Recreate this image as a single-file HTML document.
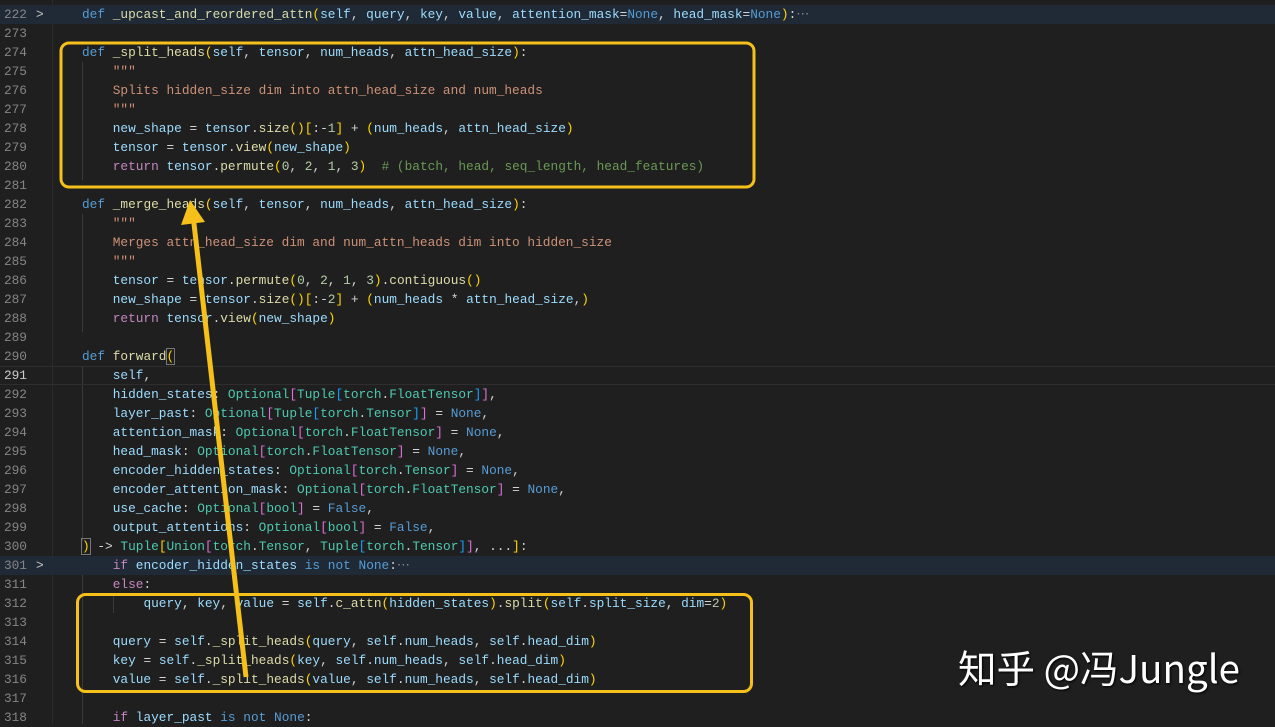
<!DOCTYPE html>
<html><head><meta charset="utf-8"><style>
body{margin:0;width:1275px;height:724px;overflow:hidden;background:#1f1f1f;font-family:"Liberation Mono",monospace;font-size:12.8px;position:relative}
.l{position:absolute;left:0;width:1275px;height:19px;line-height:19px;white-space:pre;color:#d4d4d4}
.n{position:absolute;left:0;width:27px;text-align:right;color:#858585}
.c{position:absolute;left:82px}
.hl{background:#1f2a36}
.cur{border-top:1px solid #2e2e2e;border-bottom:1px solid #2e2e2e;box-sizing:border-box;line-height:17px}
.k{color:#569cd6}.f{color:#dcdcaa}.p{color:#9cdcfe}.s{color:#ce9178}.t{color:#4ec9b0}.r{color:#c586c0}.m{color:#b5cea8}.g{color:#6a9955}
.y{color:#ffd700}.v{color:#da70d6}.b{color:#179fff}.w{color:#d4d4d4}
.ch{position:absolute;left:36px;color:#c5c5c5}
.ig{position:absolute;width:1px;background:#3a3a3a}
.wm{position:absolute;left:958px;top:639px;font-family:"Noto Sans CJK SC",sans-serif;font-size:38.5px;color:#fff;text-shadow:1px 1px 2px #000;white-space:nowrap}
</style></head><body>
<div class="ig" style="left:52px;top:0;height:724px;background:#2b2b2b"></div>
<div class="ig" style="left:82px;top:62px;height:118px"></div>
<div class="ig" style="left:82px;top:214px;height:118px"></div>
<div class="ig" style="left:82px;top:366px;height:175px"></div>
<div class="ig" style="left:82px;top:575px;height:149px"></div>
<div class="ig" style="left:113px;top:594px;height:19px"></div>

<div class="l hl" style="top:5px"><span class="n">222</span><span class="ch">&gt;</span><span class="c"><span class="k">def</span> <span class="f">_upcast_and_reordered_attn</span><span class="y">(</span><span class="p">self</span>, <span class="p">query</span>, <span class="p">key</span>, <span class="p">value</span>, <span class="p">attention_mask</span>=<span class="k">None</span>, <span class="p">head_mask</span>=<span class="k">None</span><span class="y">)</span>:<span style="color:#888">⋯</span></span></div>
<div class="l" style="top:24px"><span class="n">273</span></div>
<div class="l" style="top:43px"><span class="n">274</span><span class="c"><span class="k">def</span> <span class="f">_split_heads</span><span class="y">(</span><span class="p">self</span>, <span class="p">tensor</span>, <span class="p">num_heads</span>, <span class="p">attn_head_size</span><span class="y">)</span>:</span></div>
<div class="l" style="top:62px"><span class="n">275</span><span class="c">    <span class="s">"""</span></span></div>
<div class="l" style="top:81px"><span class="n">276</span><span class="c">    <span class="s">Splits hidden_size dim into attn_head_size and num_heads</span></span></div>
<div class="l" style="top:100px"><span class="n">277</span><span class="c">    <span class="s">"""</span></span></div>
<div class="l" style="top:119px"><span class="n">278</span><span class="c">    <span class="p">new_shape</span> = <span class="p">tensor</span>.<span class="f">size</span><span class="y">()</span><span class="y">[</span>:-<span class="m">1</span><span class="y">]</span> + <span class="y">(</span><span class="p">num_heads</span>, <span class="p">attn_head_size</span><span class="y">)</span></span></div>
<div class="l" style="top:138px"><span class="n">279</span><span class="c">    <span class="p">tensor</span> = <span class="p">tensor</span>.<span class="f">view</span><span class="y">(</span><span class="p">new_shape</span><span class="y">)</span></span></div>
<div class="l" style="top:157px"><span class="n">280</span><span class="c">    <span class="r">return</span> <span class="p">tensor</span>.<span class="f">permute</span><span class="y">(</span><span class="m">0</span>, <span class="m">2</span>, <span class="m">1</span>, <span class="m">3</span><span class="y">)</span>  <span class="g"># (batch, head, seq_length, head_features)</span></span></div>
<div class="l" style="top:176px"><span class="n">281</span></div>
<div class="l" style="top:195px"><span class="n">282</span><span class="c"><span class="k">def</span> <span class="f">_merge_heads</span><span class="y">(</span><span class="p">self</span>, <span class="p">tensor</span>, <span class="p">num_heads</span>, <span class="p">attn_head_size</span><span class="y">)</span>:</span></div>
<div class="l" style="top:214px"><span class="n">283</span><span class="c">    <span class="s">"""</span></span></div>
<div class="l" style="top:233px"><span class="n">284</span><span class="c">    <span class="s">Merges attn_head_size dim and num_attn_heads dim into hidden_size</span></span></div>
<div class="l" style="top:252px"><span class="n">285</span><span class="c">    <span class="s">"""</span></span></div>
<div class="l" style="top:271px"><span class="n">286</span><span class="c">    <span class="p">tensor</span> = <span class="p">tensor</span>.<span class="f">permute</span><span class="y">(</span><span class="m">0</span>, <span class="m">2</span>, <span class="m">1</span>, <span class="m">3</span><span class="y">)</span>.<span class="f">contiguous</span><span class="y">()</span></span></div>
<div class="l" style="top:290px"><span class="n">287</span><span class="c">    <span class="p">new_shape</span> = <span class="p">tensor</span>.<span class="f">size</span><span class="y">()</span><span class="y">[</span>:-<span class="m">2</span><span class="y">]</span> + <span class="y">(</span><span class="p">num_heads</span> * <span class="p">attn_head_size</span>,<span class="y">)</span></span></div>
<div class="l" style="top:309px"><span class="n">288</span><span class="c">    <span class="r">return</span> <span class="p">tensor</span>.<span class="f">view</span><span class="y">(</span><span class="p">new_shape</span><span class="y">)</span></span></div>
<div class="l" style="top:328px"><span class="n">289</span></div>
<div class="l" style="top:347px"><span class="n">290</span><span class="c"><span class="k">def</span> <span class="f">forward</span><span class="y" style="outline:1px solid #777">(</span></span></div>
<div class="l cur" style="top:366px"><span class="n" style="color:#ccc">291</span><span class="c">    <span class="p">self</span>,</span></div>
<div class="l" style="top:385px"><span class="n">292</span><span class="c">    <span class="p">hidden_states</span>: <span class="t">Optional</span><span class="v">[</span><span class="t">Tuple</span><span class="b">[</span><span class="t">torch</span>.<span class="t">FloatTensor</span><span class="b">]</span><span class="v">]</span>,</span></div>
<div class="l" style="top:404px"><span class="n">293</span><span class="c">    <span class="p">layer_past</span>: <span class="t">Optional</span><span class="v">[</span><span class="t">Tuple</span><span class="b">[</span><span class="t">torch</span>.<span class="t">Tensor</span><span class="b">]</span><span class="v">]</span> = <span class="k">None</span>,</span></div>
<div class="l" style="top:423px"><span class="n">294</span><span class="c">    <span class="p">attention_mask</span>: <span class="t">Optional</span><span class="v">[</span><span class="t">torch</span>.<span class="t">FloatTensor</span><span class="v">]</span> = <span class="k">None</span>,</span></div>
<div class="l" style="top:442px"><span class="n">295</span><span class="c">    <span class="p">head_mask</span>: <span class="t">Optional</span><span class="v">[</span><span class="t">torch</span>.<span class="t">FloatTensor</span><span class="v">]</span> = <span class="k">None</span>,</span></div>
<div class="l" style="top:461px"><span class="n">296</span><span class="c">    <span class="p">encoder_hidden_states</span>: <span class="t">Optional</span><span class="v">[</span><span class="t">torch</span>.<span class="t">Tensor</span><span class="v">]</span> = <span class="k">None</span>,</span></div>
<div class="l" style="top:480px"><span class="n">297</span><span class="c">    <span class="p">encoder_attention_mask</span>: <span class="t">Optional</span><span class="v">[</span><span class="t">torch</span>.<span class="t">FloatTensor</span><span class="v">]</span> = <span class="k">None</span>,</span></div>
<div class="l" style="top:499px"><span class="n">298</span><span class="c">    <span class="p">use_cache</span>: <span class="t">Optional</span><span class="v">[</span><span class="t">bool</span><span class="v">]</span> = <span class="k">False</span>,</span></div>
<div class="l" style="top:518px"><span class="n">299</span><span class="c">    <span class="p">output_attentions</span>: <span class="t">Optional</span><span class="v">[</span><span class="t">bool</span><span class="v">]</span> = <span class="k">False</span>,</span></div>
<div class="l" style="top:537px"><span class="n">300</span><span class="c"><span class="y" style="outline:1px solid #777">)</span> -&gt; <span class="t">Tuple</span><span class="y">[</span><span class="t">Union</span><span class="v">[</span><span class="t">torch</span>.<span class="t">Tensor</span>, <span class="t">Tuple</span><span class="b">[</span><span class="t">torch</span>.<span class="t">Tensor</span><span class="b">]</span><span class="v">]</span>, ...<span class="y">]</span>:</span></div>
<div class="l hl" style="top:556px"><span class="n">301</span><span class="ch">&gt;</span><span class="c">    <span class="r">if</span> <span class="p">encoder_hidden_states</span> <span class="k">is</span> <span class="k">not</span> <span class="k">None</span>:<span style="color:#888">⋯</span></span></div>
<div class="l" style="top:575px"><span class="n">311</span><span class="c">    <span class="r">else</span>:</span></div>
<div class="l" style="top:594px"><span class="n">312</span><span class="c">        <span class="p">query</span>, <span class="p">key</span>, <span class="p">value</span> = <span class="p">self</span>.<span class="f">c_attn</span><span class="y">(</span><span class="p">hidden_states</span><span class="y">)</span>.<span class="f">split</span><span class="y">(</span><span class="p">self</span>.<span class="p">split_size</span>, <span class="p">dim</span>=<span class="m">2</span><span class="y">)</span></span></div>
<div class="l" style="top:613px"><span class="n">313</span></div>
<div class="l" style="top:632px"><span class="n">314</span><span class="c">    <span class="p">query</span> = <span class="p">self</span>.<span class="f">_split_heads</span><span class="y">(</span><span class="p">query</span>, <span class="p">self</span>.<span class="p">num_heads</span>, <span class="p">self</span>.<span class="p">head_dim</span><span class="y">)</span></span></div>
<div class="l" style="top:651px"><span class="n">315</span><span class="c">    <span class="p">key</span> = <span class="p">self</span>.<span class="f">_split_heads</span><span class="y">(</span><span class="p">key</span>, <span class="p">self</span>.<span class="p">num_heads</span>, <span class="p">self</span>.<span class="p">head_dim</span><span class="y">)</span></span></div>
<div class="l" style="top:670px"><span class="n">316</span><span class="c">    <span class="p">value</span> = <span class="p">self</span>.<span class="f">_split_heads</span><span class="y">(</span><span class="p">value</span>, <span class="p">self</span>.<span class="p">num_heads</span>, <span class="p">self</span>.<span class="p">head_dim</span><span class="y">)</span></span></div>
<div class="l" style="top:689px"><span class="n">317</span></div>
<div class="l" style="top:708px"><span class="n">318</span><span class="c">    <span class="r">if</span> <span class="p">layer_past</span> <span class="k">is</span> <span class="k">not</span> <span class="k">None</span>:</span></div>

<svg style="position:absolute;left:0;top:0" width="1275" height="724">
<rect x="61" y="43" width="693" height="144" rx="8" fill="none" stroke="#f5c01a" stroke-width="3"/>
<rect x="77.5" y="594.5" width="674" height="97" rx="8" fill="none" stroke="#f5c01a" stroke-width="3"/>
<line x1="246" y1="677" x2="193" y2="215" stroke="#f5c01a" stroke-width="5"/>
<polygon points="190,200 181,225 205,222" fill="#f5c01a"/>
</svg>
<div class="wm">知乎 @冯Jungle</div>
</body></html>
